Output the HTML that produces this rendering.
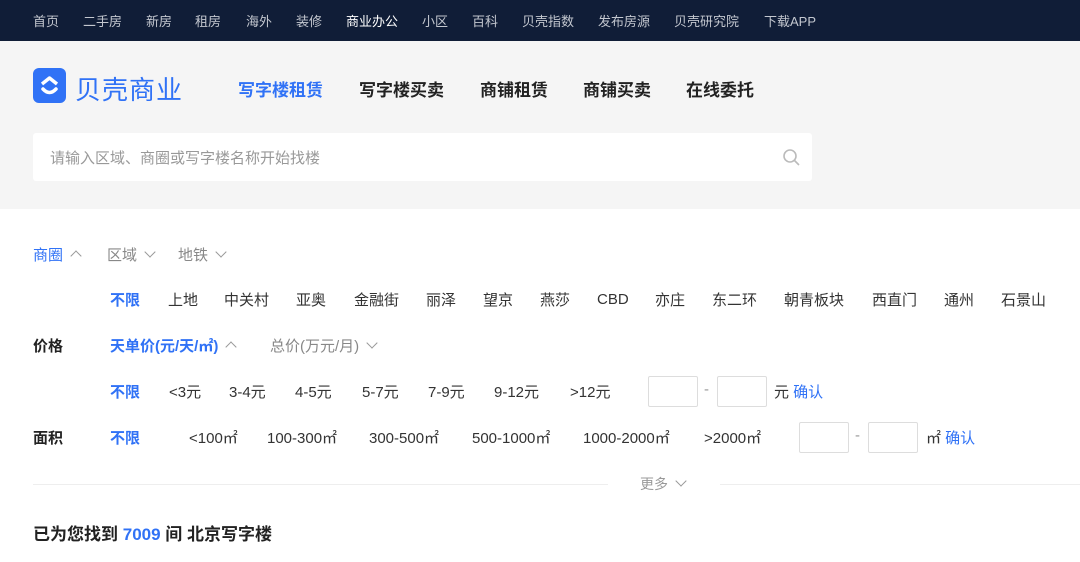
<!DOCTYPE html><html><head><meta charset="utf-8"><style>
*{margin:0;padding:0;box-sizing:border-box}
body{width:1080px;height:562px;background:#fff;font-family:"Liberation Sans","Noto Sans CJK SC",sans-serif;position:relative;overflow:hidden;color:#222}
.a{position:absolute;white-space:nowrap}
.nav{position:absolute;left:0;top:0;width:1080px;height:41px;background:#101d37}
.nav span{position:absolute;top:11px;font-size:13px;color:#c3c7cf}
.hd{position:absolute;left:0;top:41px;width:1080px;height:168px;background:#f5f5f5}
.m{font-size:17px;font-weight:bold;top:76px;color:#222}
.f{font-size:15px;color:#333;margin-top:-2px}
.b{color:#3072f6}
.bx{position:absolute;width:50px;height:31px;border:1px solid #ddd;border-radius:2px;background:#fff}
.chev{display:inline-block;width:8px;height:8px;border-right:1.6px solid #999;border-bottom:1.6px solid #999;transform:rotate(45deg);margin-left:9px;vertical-align:4px}
.up{transform:rotate(-135deg);vertical-align:0}
</style></head><body>
<div class="nav">
<span style="left:33px">首页</span><span style="left:83px">二手房</span><span style="left:146px">新房</span><span style="left:195px">租房</span><span style="left:246px">海外</span><span style="left:296px">装修</span><span style="left:346px;color:#fff">商业办公</span><span style="left:422px">小区</span><span style="left:472px">百科</span><span style="left:522px">贝壳指数</span><span style="left:598px">发布房源</span><span style="left:674px">贝壳研究院</span><span style="left:764px">下载APP</span>
</div>
<div class="hd"></div>
<div class="a" style="left:33px;top:68px;width:33px;height:35px;background:#3072f6;border-radius:6px"></div>
<svg class="a" style="left:33px;top:68px" width="33" height="35" viewBox="0 0 33 35"><path d="M9 16 L16.5 10 L24 16" stroke="#fff" stroke-width="3.5" fill="none" stroke-linejoin="round"/><path d="M10 21 Q16.5 28 23 21" stroke="#fff" stroke-width="3.5" fill="none" stroke-linecap="round"/></svg>
<div class="a" style="left:75px;top:70px;font-size:26px;color:#3072f6;letter-spacing:1px">贝壳商业</div>
<div class="a m b" style="left:238px">写字楼租赁</div>
<div class="a m" style="left:359px">写字楼买卖</div>
<div class="a m" style="left:480px">商铺租赁</div>
<div class="a m" style="left:583px">商铺买卖</div>
<div class="a m" style="left:686px">在线委托</div>
<div class="a" style="left:33px;top:133px;width:779px;height:48px;background:#fff;border-radius:3px"></div>
<div class="a" style="left:50px;top:147px;font-size:15px;color:#999">请输入区域、商圈或写字楼名称开始找楼</div>
<svg class="a" style="left:782px;top:148px" width="20" height="20"><circle cx="8" cy="8" r="6" stroke="#bbb" stroke-width="1.6" fill="none"/><path d="M12.5 12.5 L17 17" stroke="#bbb" stroke-width="1.6"/></svg>

<div class="a f b" style="left:33px;top:246px">商圈<span class="chev up"></span></div>
<div class="a f" style="left:107px;top:246px;color:#888">区域<span class="chev"></span></div>
<div class="a f" style="left:178px;top:246px;color:#888">地铁<span class="chev"></span></div>
<div class="a f b" style="top:291px;left:110px;font-weight:bold">不限</div>
<div class="a f" style="top:291px;left:168px">上地</div><div class="a f" style="top:291px;left:224px">中关村</div><div class="a f" style="top:291px;left:296px">亚奥</div><div class="a f" style="top:291px;left:354px">金融街</div><div class="a f" style="top:291px;left:426px">丽泽</div><div class="a f" style="top:291px;left:483px">望京</div><div class="a f" style="top:291px;left:540px">燕莎</div><div class="a f" style="top:293px;left:597px">CBD</div><div class="a f" style="top:291px;left:655px">亦庄</div><div class="a f" style="top:291px;left:712px">东二环</div><div class="a f" style="top:291px;left:784px">朝青板块</div><div class="a f" style="top:291px;left:872px">西直门</div><div class="a f" style="top:291px;left:944px">通州</div><div class="a f" style="top:291px;left:1001px">石景山</div>

<div class="a f" style="left:33px;top:337px;font-weight:bold;color:#222">价格</div>
<div class="a f b" style="left:110px;top:337px;font-weight:bold">天单价(元/天/㎡)<span class="chev up"></span></div>
<div class="a f" style="left:270px;top:337px;color:#888">总价(万元/月)<span class="chev"></span></div>

<div class="a f b" style="left:110px;top:383px;font-weight:bold">不限</div>
<div class="a f" style="left:169px;top:383px">&lt;3元</div><div class="a f" style="left:229px;top:383px">3-4元</div><div class="a f" style="left:295px;top:383px">4-5元</div><div class="a f" style="left:362px;top:383px">5-7元</div><div class="a f" style="left:428px;top:383px">7-9元</div><div class="a f" style="left:494px;top:383px">9-12元</div><div class="a f" style="left:570px;top:383px">&gt;12元</div>
<div class="bx" style="left:648px;top:376px"></div><div class="a f" style="left:704px;top:383px;color:#999">-</div><div class="bx" style="left:717px;top:376px"></div>
<div class="a f" style="left:774px;top:383px">元 <span class="b">确认</span></div>

<div class="a f" style="left:33px;top:429px;font-weight:bold;color:#222">面积</div>
<div class="a f b" style="left:110px;top:429px;font-weight:bold">不限</div>
<div class="a f" style="left:189px;top:429px">&lt;100㎡</div><div class="a f" style="left:267px;top:429px">100-300㎡</div><div class="a f" style="left:369px;top:429px">300-500㎡</div><div class="a f" style="left:472px;top:429px">500-1000㎡</div><div class="a f" style="left:583px;top:429px">1000-2000㎡</div><div class="a f" style="left:704px;top:429px">&gt;2000㎡</div>
<div class="bx" style="left:799px;top:422px"></div><div class="a f" style="left:855px;top:429px;color:#999">-</div><div class="bx" style="left:868px;top:422px"></div>
<div class="a f" style="left:926px;top:429px">㎡ <span class="b">确认</span></div>

<div class="a" style="left:33px;top:484px;width:575px;height:1px;background:#eee"></div>
<div class="a" style="left:720px;top:484px;width:360px;height:1px;background:#eee"></div>
<div class="a" style="left:640px;top:474px;font-size:14px;color:#999">更多<span class="chev" style="border-color:#999"></span></div>

<div class="a" style="left:33px;top:520px;font-size:17px;font-weight:bold;color:#222">已为您找到 <span class="b">7009</span> 间 北京写字楼</div>
</body></html>
